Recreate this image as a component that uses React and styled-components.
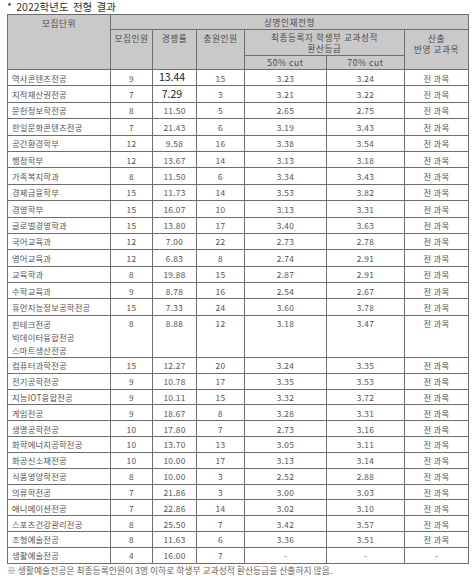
import React from 'react'
import styled, { createGlobalStyle } from 'styled-components'

const GlobalStyle = createGlobalStyle`
  html, body {
    margin: 0;
    padding: 0;
    background: #ffffff;
  }
  body {
    font-family: "Noto Sans CJK KR", "Noto Sans", sans-serif;
    color: #555555;
  }
`

const Page = styled.div`
  width: 474px;
  height: 577px;
  padding: 0 6px 0 7px;
  box-sizing: border-box;
  overflow: hidden;
`

const Title = styled.div`
  font-size: 10.5px;
  line-height: 14px;
  color: #333333;
  word-spacing: 2px;
`

const Table = styled.table`
  width: 461px;
  table-layout: fixed;
  border-collapse: collapse;
  border: 1px solid #6e6e6e;
  font-size: 8.3px;
`

const HeadCell = styled.th`
  background: #c9c9c9;
  border: 1px solid #6e6e6e;
  font-weight: 400;
  font-size: 8.6px;
  letter-spacing: 0.6px;
  color: #4a4a4a;
  text-align: center;
  vertical-align: ${({ $top }) => ($top ? 'top' : 'middle')};
  padding: ${({ $top }) => ($top ? '3px 0 0' : '0')};
  height: ${({ $h }) => $h}px;
  line-height: 11px;
  box-sizing: border-box;
  white-space: nowrap;
`

const Row = styled.tr`
  height: ${({ $h }) => $h}px;
`

const NameCell = styled.td`
  border: 1px solid #6e6e6e;
  padding: ${({ $tall }) => ($tall ? '2px 0 0 4px' : '0 0 0 4px')};
  vertical-align: ${({ $tall }) => ($tall ? 'top' : 'middle')};
  line-height: ${({ $tall }) => ($tall ? '13px' : '1')};
  letter-spacing: 0.2px;
  white-space: nowrap;
  color: #555555;
`

const ValueCell = styled.td`
  border: 1px solid #6e6e6e;
  text-align: center;
  padding: ${({ $tall }) => ($tall ? '3px 0 0' : '0')};
  vertical-align: ${({ $tall }) => ($tall ? 'top' : 'middle')};
  line-height: 1;
  letter-spacing: ${({ $big }) => ($big ? '0' : '0.3px')};
  color: ${({ $big }) => ($big ? '#222222' : '#555555')};
  font-size: ${({ $big }) => ($big ? '10.5px' : '8.3px')};
  padding-right: ${({ $big }) => ($big ? '5px' : '0')};
  white-space: nowrap;
`

const Note = styled.div`
  font-size: 8.8px;
  line-height: 12px;
  color: #666666;
  margin-top: 1px;
  white-space: nowrap;
`

const rows = [
  ['역사콘텐츠전공', '9', '13.44', '15', '3.23', '3.24', true],
  ['지적재산권전공', '7', '7.29', '3', '3.21', '3.22', true],
  ['문헌정보학전공', '8', '11.50', '5', '2.65', '2.75'],
  ['한일문화콘텐츠전공', '7', '21.43', '6', '3.19', '3.43'],
  ['공간환경학부', '12', '9.58', '16', '3.38', '3.54'],
  ['행정학부', '12', '13.67', '14', '3.13', '3.18'],
  ['가족복지학과', '8', '11.50', '6', '3.34', '3.43'],
  ['경제금융학부', '15', '11.73', '14', '3.53', '3.82'],
  ['경영학부', '15', '16.07', '10', '3.13', '3.31'],
  ['글로벌경영학과', '15', '13.80', '17', '3.40', '3.63'],
  ['국어교육과', '12', '7.00', '22', '2.73', '2.78'],
  ['영어교육과', '12', '6.83', '8', '2.74', '2.91'],
  ['교육학과', '8', '19.88', '15', '2.87', '2.91'],
  ['수학교육과', '9', '8.78', '16', '2.54', '2.67'],
  ['휴먼지능정보공학전공', '15', '7.33', '24', '3.60', '3.78'],
  [['핀테크전공', '빅데이터융합전공', '스마트생산전공'], '8', '8.88', '12', '3.18', '3.47'],
  ['컴퓨터과학전공', '15', '12.27', '20', '3.24', '3.35'],
  ['전기공학전공', '9', '10.78', '17', '3.35', '3.53'],
  ['지능IOT융합전공', '9', '10.11', '15', '3.32', '3.72'],
  ['게임전공', '9', '18.67', '8', '3.28', '3.31'],
  ['생명공학전공', '10', '17.80', '7', '2.73', '3.16'],
  ['화학에너지공학전공', '10', '13.70', '13', '3.05', '3.11'],
  ['화공신소재전공', '10', '10.00', '17', '3.13', '3.14'],
  ['식품영양학전공', '8', '10.00', '3', '2.52', '2.88'],
  ['의류학전공', '7', '21.86', '3', '3.00', '3.03'],
  ['애니메이션전공', '7', '22.86', '14', '3.02', '3.10'],
  ['스포츠건강관리전공', '8', '25.50', '7', '3.42', '3.57'],
  ['조형예술전공', '8', '11.63', '6', '3.36', '3.51'],
  ['생활예술전공', '4', '16.00', '7', '-', '-', false, '-'],
]

export default function App() {
  return (
    <Page>
      <GlobalStyle />
      <Title>* 2022학년도 전형 결과</Title>
      <Table>
        <colgroup>
          <col style={{ width: 103 }} />
          <col style={{ width: 42 }} />
          <col style={{ width: 44 }} />
          <col style={{ width: 48 }} />
          <col style={{ width: 82 }} />
          <col style={{ width: 78 }} />
          <col style={{ width: 64 }} />
        </colgroup>
        <thead>
          <tr>
            <HeadCell rowSpan={3} $top $h={15}>모집단위</HeadCell>
            <HeadCell colSpan={6} $h={15}>상명인재전형</HeadCell>
          </tr>
          <tr>
            <HeadCell rowSpan={2} $top $h={26}>모집인원</HeadCell>
            <HeadCell rowSpan={2} $top $h={26}>경쟁률</HeadCell>
            <HeadCell rowSpan={2} $top $h={26}>충원인원</HeadCell>
            <HeadCell colSpan={2} $h={26}>
              최종등록자 학생부 교과성적
              <br />
              환산등급
            </HeadCell>
            <HeadCell rowSpan={2} $top $h={26}>
              산출
              <br />
              반영 교과목
            </HeadCell>
          </tr>
          <tr>
            <HeadCell $h={14}>50% cut</HeadCell>
            <HeadCell $h={14}>70% cut</HeadCell>
          </tr>
        </thead>
        <tbody>
          {rows.map(([name, quota, rate, extra, cut50, cut70, big, subject], i) => {
            const tall = Array.isArray(name)
            const h = tall ? 42 : i < 15 ? 16.4 : 15.85
            return (
              <Row key={i} $h={h}>
                <NameCell $tall={tall}>
                  {tall
                    ? name.map((n, j) => (
                        <React.Fragment key={n}>
                          {j > 0 && <br />}
                          {n}
                        </React.Fragment>
                      ))
                    : name}
                </NameCell>
                <ValueCell $tall={tall}>{quota}</ValueCell>
                <ValueCell $tall={tall} $big={big}>{rate}</ValueCell>
                <ValueCell $tall={tall}>{extra}</ValueCell>
                <ValueCell $tall={tall}>{cut50}</ValueCell>
                <ValueCell $tall={tall}>{cut70}</ValueCell>
                <ValueCell $tall={tall}>{subject || '전 과목'}</ValueCell>
              </Row>
            )
          })}
        </tbody>
      </Table>
      <Note>※ 생활예술전공은 최종등록인원이 3명 이하로 학생부 교과성적 환산등급을 산출하지 않음.</Note>
    </Page>
  )
}
